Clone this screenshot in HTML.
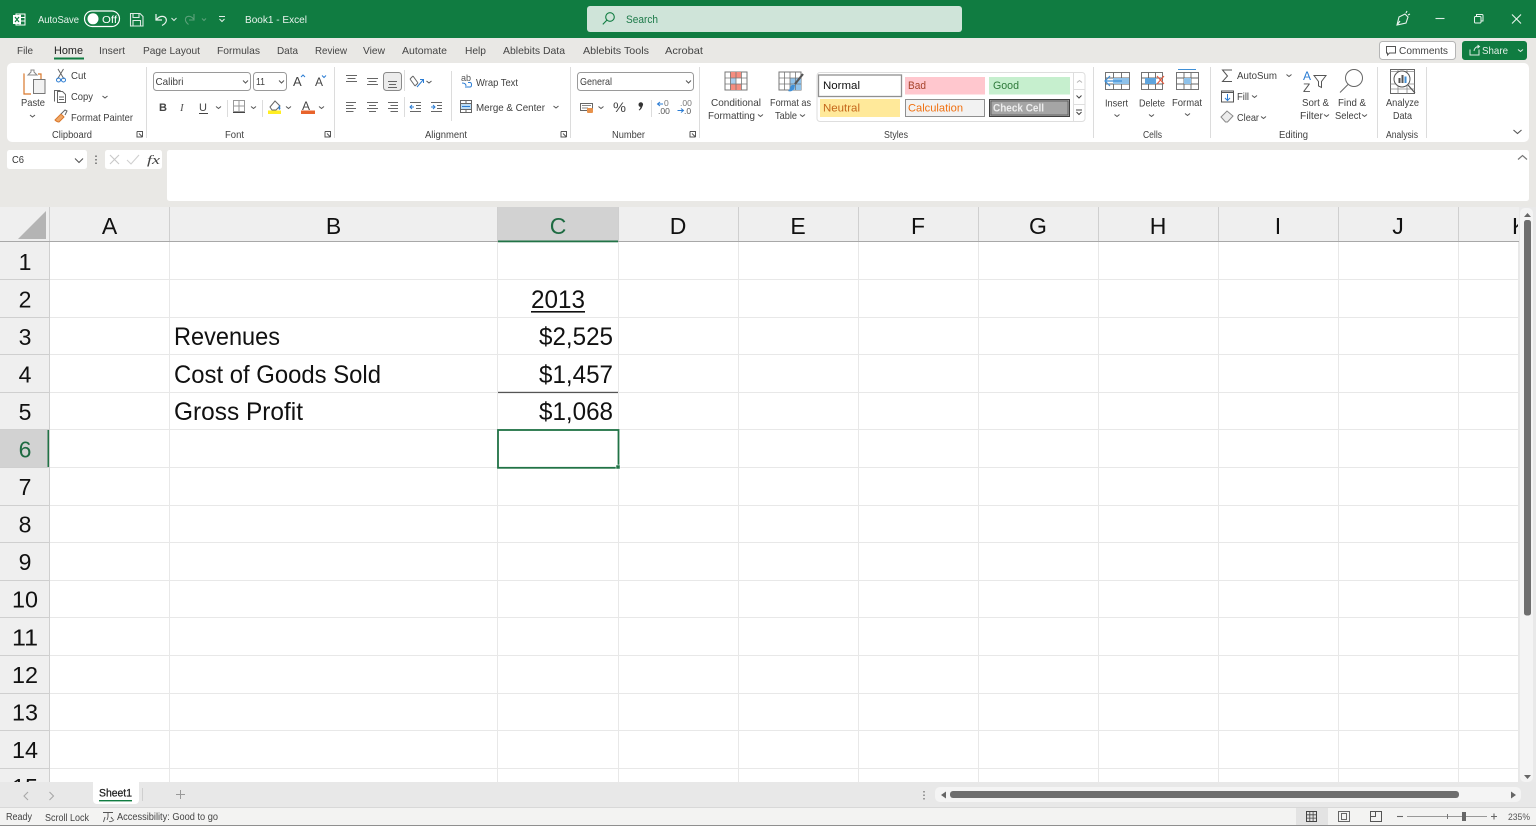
<!DOCTYPE html>
<html><head><meta charset="utf-8"><title>Book1 - Excel</title>
<style>
html,body{margin:0;padding:0;background:#fff;width:1536px;height:826px;overflow:hidden}
svg{display:block;position:absolute;left:0;top:0}
#root{filter:blur(.3px)}
text{font-family:"Liberation Sans",sans-serif;font-size:10.5px;fill:#444}
.t{fill:#3f3f3f}
.h{font-size:23px;fill:#111}
.c{font-size:25px;fill:#111}
.i{fill:none;stroke:#666;stroke-width:1}
.ch{fill:none;stroke:#555;stroke-width:1}
</style></head><body>
<svg id="root" width="1536" height="826" viewBox="0 0 1536 826" xmlns="http://www.w3.org/2000/svg">
<!-- backgrounds -->
<rect width="1536" height="826" fill="#fff"/>
<rect width="1536" height="38" fill="#107C41"/>
<rect y="38" width="1536" height="169" fill="#E9E8E5"/>

<!-- title bar -->
<g>
<rect x="16" y="14" width="9" height="11" fill="none" stroke="#fff"/><path d="M20 14v11M20 17.5h5M20 21h5" stroke="#fff" fill="none"/>
<rect x="13" y="15" width="8" height="9" fill="#fff"/><path d="M15 17l4 5M19 17l-4 5" stroke="#107C41" stroke-width="1.2"/>
<text x="38" y="23" style="fill:#e9f3ed" textLength="41" lengthAdjust="spacingAndGlyphs">AutoSave</text>
<rect x="84.500" y="11" width="35" height="15.500" rx="7.700" fill="none" stroke="#fff" stroke-width="1.200"/>
<circle cx="93" cy="18.800" r="5.500" fill="#fff"/>
<text x="102" y="23" style="fill:#fff;font-size:10px" textLength="15" lengthAdjust="spacingAndGlyphs">Off</text>
<path d="M130.500 13.500h9.500l3 3v9.500h-12.500zM133 13.500v4h6v-4M133 26v-5.500h7.500v5.500" fill="none" stroke="#dcebe3" stroke-width="1.100"/>
<path d="M156 14v6h6M156.500 19.500c3-4 8-4 9.500-1 1.200 3-1 5.500-4 7" fill="none" stroke="#eaf4ee" stroke-width="1.200"/>
<path d="M171.500 18l2.500 2.500 2.500-2.500" fill="none" stroke="#dcebe3"/>
<path d="M194 14v6h-5M193.500 19c-2-3-6-3.500-7.500-1.500-1.500 2.500 0 5 2.500 7" fill="none" stroke="#5da27b" stroke-width="1.100"/>
<path d="M202 18.500l2 2 2-2" fill="none" stroke="#5da27b"/>
<path d="M219 16.500h6M219.500 19l2.500 2.500 2.500-2.500" fill="none" stroke="#e4f0e9"/>
<text x="245" y="23" style="fill:#e9f3ed" textLength="62" lengthAdjust="spacingAndGlyphs">Book1  -  Excel</text>
<rect x="587" y="6" width="375" height="26" rx="3" fill="#CFE4D9"/>
<circle cx="610" cy="17" r="4.300" fill="none" stroke="#107C41" stroke-width="1.100"/><path d="M606.800 20.200l-4 4.200" stroke="#107C41" stroke-width="1.100"/>
<text x="626" y="23" style="fill:#1c7a49;font-size:11px" textLength="32" lengthAdjust="spacingAndGlyphs">Search</text>
<path d="M1397 25l2-8 6-3 3 3-2 6zM1397 25l3-4M1406 13l1-2M1408 15l2-1" fill="none" stroke="#e9f3ed" stroke-width="1.100"/>
<path d="M1435.500 18.500h9" stroke="#dcebe3" stroke-width="1.100"/>
<rect x="1474.500" y="16.500" width="6.500" height="6.500" rx="1" fill="none" stroke="#eaf4ee"/><path d="M1476.500 16v-1.500h5.500a1 1 0 0 1 1 1v5.500h-1.500" fill="none" stroke="#eaf4ee"/>
<path d="M1512 14.500l9 9M1521 14.500l-9 9" stroke="#eaf4ee" stroke-width="1.100"/>
</g>

<!-- tabs -->
<g class="tabs">
<text x="17" y="54" textLength="16" lengthAdjust="spacingAndGlyphs">File</text>
<text x="54" y="54" style="fill:#222;font-size:10.800px" textLength="29" lengthAdjust="spacingAndGlyphs">Home</text>
<rect x="54" y="57.500" width="30" height="2" fill="#107C41"/>
<text x="99" y="54" textLength="26" lengthAdjust="spacingAndGlyphs">Insert</text>
<text x="143" y="54" textLength="57" lengthAdjust="spacingAndGlyphs">Page Layout</text>
<text x="217" y="54" textLength="43" lengthAdjust="spacingAndGlyphs">Formulas</text>
<text x="277" y="54" textLength="21" lengthAdjust="spacingAndGlyphs">Data</text>
<text x="315" y="54" textLength="32" lengthAdjust="spacingAndGlyphs">Review</text>
<text x="363" y="54" textLength="22" lengthAdjust="spacingAndGlyphs">View</text>
<text x="402" y="54" textLength="45" lengthAdjust="spacingAndGlyphs">Automate</text>
<text x="465" y="54" textLength="21" lengthAdjust="spacingAndGlyphs">Help</text>
<text x="503" y="54" textLength="62" lengthAdjust="spacingAndGlyphs">Ablebits Data</text>
<text x="583" y="54" textLength="66" lengthAdjust="spacingAndGlyphs">Ablebits Tools</text>
<text x="665" y="54" textLength="38" lengthAdjust="spacingAndGlyphs">Acrobat</text>
<rect x="1379.500" y="41.500" width="76" height="18" rx="3" fill="#fff" stroke="#b5b5b5"/>
<path d="M1386.500 46.500h9v6.500h-6l-2 2v-2h-1z" fill="none" stroke="#555"/>
<text x="1399" y="54" textLength="49" lengthAdjust="spacingAndGlyphs">Comments</text>
<rect x="1462" y="41" width="65" height="19" rx="3" fill="#107C41"/>
<path d="M1470 49.500v5.500h9v-5.500M1474 51c.5-3 2.500-4.500 5-4.500M1477.500 45l2 1.500-2 1.800" fill="none" stroke="#dcebe3"/>
<text x="1482" y="54" style="fill:#e4f0e9" textLength="26" lengthAdjust="spacingAndGlyphs">Share</text>
<path d="M1518 49.500l2.500 2 2.500-2" fill="none" stroke="#e4f0e9"/>
</g>

<!-- ribbon -->
<rect x="7" y="63" width="1522" height="79" rx="5" fill="#fff"/>
<g stroke="#dcdcdc"><path d="M146.500 67v71M334.500 67v71M570.500 67v71M699.500 67v71M1093.500 67v71M1210.500 67v71M1377.500 67v71M1426.500 67v71"/></g>

<!-- clipboard -->
<path d="M24.500 74h-.5v20h7M38 74h3v5" fill="none" stroke="#d9772b" stroke-width="1.200"/>
<path d="M28 75l3-3v-2h3v2l3 3z" fill="#fff" stroke="#888"/>
<rect x="33.500" y="79.500" width="11.500" height="14" fill="#f2f2f2" stroke="#777"/>
<text class="t" x="21" y="106" textLength="24" lengthAdjust="spacingAndGlyphs">Paste</text>
<path class="ch" d="M30 115l2.500 2 2.500-2"/>
<path d="M58 69l6 10M63.500 69l-6 10" stroke="#666" fill="none"/><circle cx="58.500" cy="80" r="2" fill="none" stroke="#2b7cd3"/><circle cx="63.500" cy="80" r="2" fill="none" stroke="#2b7cd3"/>
<text class="t" x="71" y="79" textLength="15" lengthAdjust="spacingAndGlyphs">Cut</text>
<path d="M54.500 101.500v-11h6M57.500 91.500h5l3 3v8h-8zM59 97h5M59 99.500h5" class="i"/>
<text class="t" x="71" y="100" textLength="22" lengthAdjust="spacingAndGlyphs">Copy</text>
<path class="ch" d="M102.500 96l2.500 2 2.500-2"/>
<path d="M55 120l6-6 3 3-5 5c-2 0-3-1-4-2z" fill="#f0a868" stroke="#d9772b"/><path d="M61 114l4-4 2 1-2 4" fill="#fff" stroke="#666"/>
<text class="t" x="71" y="121" textLength="62" lengthAdjust="spacingAndGlyphs">Format Painter</text>
<text class="t" x="52" y="138" style="font-size:9.800px" textLength="40" lengthAdjust="spacingAndGlyphs">Clipboard</text>
<path class="ch" d="M137 131.500h5.500v5.500M137 131.500v5.500h5.500M139 133.500l3 3" stroke-width=".8"/>

<!-- font -->
<rect x="153.500" y="72.500" width="97" height="18" rx="3" fill="#fff" stroke="#9a9a9a"/>
<text class="t" x="155.500" y="85" textLength="28" lengthAdjust="spacingAndGlyphs">Calibri</text>
<path class="ch" d="M243 80.500l2.500 2.500 2.500-2.500"/>
<rect x="253.500" y="72.500" width="33" height="18" rx="3" fill="#fff" stroke="#9a9a9a"/>
<text class="t" x="256" y="85" textLength="9" lengthAdjust="spacingAndGlyphs">11</text>
<path class="ch" d="M279 80.500l2.500 2.500 2.500-2.500"/>
<text x="293" y="86" style="font-size:13px;fill:#444">A</text><path d="M301 77l2-2 2 2" fill="none" stroke="#2b7cd3"/>
<text x="315" y="86" style="font-size:12px;fill:#444">A</text><path d="M322 75.500l2 2 2-2" fill="none" stroke="#2b7cd3"/>
<text x="159" y="111" style="font-size:11px;font-weight:bold;fill:#444">B</text>
<text x="180" y="111" style="font-size:11px;font-style:italic;fill:#555;font-family:'Liberation Serif',serif">I</text>
<text x="199" y="111" style="font-size:11px;fill:#444">U</text><path d="M199 113.500h9" stroke="#444"/>
<path class="ch" d="M216 106.500l2.500 2 2.500-2"/>
<path d="M227.500 100v17M262.500 100v17" stroke="#dcdcdc"/>
<rect x="233.500" y="100.500" width="11" height="11" fill="none" stroke="#999"/><path d="M239 100.500v11M233.500 106h11" stroke="#999"/><path d="M233 112.500h12" stroke="#444"/>
<path class="ch" d="M251 106.500l2.500 2 2.500-2"/>
<path d="M270 107l5-6 5 5-4 4h-4z" fill="#fff" stroke="#666"/><path d="M279 105c1 2 2 3 1 4.500-1 .8-2-.5-1-4.500z" fill="#2b7cd3"/>
<rect x="268" y="110.500" width="13" height="3.500" fill="#FFEE22"/>
<path class="ch" d="M286 106.500l2.500 2 2.500-2"/>
<text x="302" y="110" style="font-size:12px;fill:#444">A</text>
<rect x="301" y="110.500" width="14" height="3.500" fill="#E8632B"/>
<path class="ch" d="M319 106.500l2.500 2 2.500-2"/>
<text class="t" x="225" y="138" style="font-size:9.800px" textLength="19" lengthAdjust="spacingAndGlyphs">Font</text>
<path class="ch" d="M325 131.500h5.500v5.500M325 131.500v5.500h5.500M327 133.500l3 3" stroke-width=".8"/>

<!-- alignment -->
<path class="i" d="M346 75.500h11M347.500 78.500h8M346 81.500h11M367 78.500h11M368.500 81.500h8M367 84.500h11"/>
<rect x="383.500" y="72.500" width="18" height="18" rx="3" fill="#ececec" stroke="#8a8a8a"/>
<path class="i" d="M388 81.500h9M389 84.500h7M388 87.500h9"/>
<path d="M404.500 70v21" stroke="#dcdcdc"/>
<path d="M410 79l5 7M413 76l5 7M410 79l3-3M415 86l3-3" fill="none" stroke="#666"/><path d="M417 87l6-7M420 79.500h3.500v3.500" fill="none" stroke="#2b7cd3"/>
<path class="ch" d="M426.500 81l2.500 2 2.500-2"/>
<path class="i" d="M346 102.500h10M346 105.500h7.500M346 108.500h10M346 111.500h7.500M367 102.500h11M369 105.500h7M367 108.500h11M369 111.500h7M388 102.500h10M390.500 105.500h7.500M388 108.500h10M390.500 111.500h7.500"/>
<path d="M404.500 97v20" stroke="#dcdcdc"/>
<path class="i" d="M410 102.500h11M410 111.500h11M416 105.500h5M416 108.500h5M431 102.500h11M431 111.500h11M437 105.500h5M437 108.500h5"/>
<path d="M414 107h-4M412 105l-2 2 2 2M431 107h4M433 105l2 2-2 2" fill="none" stroke="#2b7cd3"/>
<path d="M451.500 71v50" stroke="#dcdcdc"/>
<text x="461" y="81" style="font-size:9px;fill:#555">ab</text>
<path d="M462 83c3 0 4 1 4 3M468 82.500h2c2 0 2 4.500 0 4.500H465" fill="none" stroke="#2b7cd3"/>
<text class="t" x="476" y="86" textLength="42" lengthAdjust="spacingAndGlyphs">Wrap Text</text>
<rect x="460.500" y="100.500" width="11" height="12" fill="#fff" stroke="#666"/><rect x="461" y="104" width="10" height="5" fill="#bcdcf4"/><path d="M461 103.500h10M461 109.500h10M466 101v2M466 110v2" stroke="#666"/><path d="M462 106.500h8" stroke="#2b7cd3"/>
<text class="t" x="476" y="111" textLength="69" lengthAdjust="spacingAndGlyphs">Merge &amp; Center</text>
<path class="ch" d="M553.500 106l2.500 2 2.500-2"/>
<text class="t" x="425" y="138" style="font-size:9.800px" textLength="42" lengthAdjust="spacingAndGlyphs">Alignment</text>
<path class="ch" d="M561 131.500h5.500v5.500M561 131.500v5.500h5.500M563 133.500l3 3" stroke-width=".8"/>

<!-- number -->
<rect x="577.500" y="72.500" width="116" height="18" rx="3" fill="#fff" stroke="#9a9a9a"/>
<text class="t" x="580" y="85" textLength="32" lengthAdjust="spacingAndGlyphs">General</text>
<path class="ch" d="M686 80.500l2.500 2.500 2.500-2.500"/>
<rect x="580.500" y="103.500" width="12" height="7" fill="#fff" stroke="#666"/><path d="M582 105.500h9M582 108h6" stroke="#888"/><rect x="587" y="108" width="6" height="5" rx="1" fill="#E8924B"/>
<path class="ch" d="M598.500 106.500l2.500 2 2.500-2"/>
<text x="613" y="112" style="font-size:14px;fill:#444" textLength="13" lengthAdjust="spacingAndGlyphs">%</text>
<path d="M638.500 104.500a2.300 2.300 0 1 1 4 1.600c-.5 1.800-1.500 3.400-3.200 4.400l-.6-.6c1-.8 1.600-1.600 1.800-3.100-1.200.2-2-1-2-2.300z" fill="#333"/>
<path d="M651.500 100v17" stroke="#dcdcdc"/>
<text x="664" y="106" style="font-size:8.500px;fill:#777">0</text><text x="658" y="114" style="font-size:8.500px;fill:#555">.00</text>
<path d="M663 104h-5.500M660 102l-2.500 2 2.500 2" fill="none" stroke="#2b7cd3"/>
<text x="680" y="106" style="font-size:8.500px;fill:#777">.00</text><text x="684" y="114" style="font-size:8.500px;fill:#555">.0</text>
<path d="M677.500 110.500h6M681 108.500l2.500 2-2.500 2" fill="none" stroke="#2b7cd3"/>
<text class="t" x="612" y="138" style="font-size:9.800px" textLength="33" lengthAdjust="spacingAndGlyphs">Number</text>
<path class="ch" d="M690 131.500h5.500v5.500M690 131.500v5.500h5.500M692 133.500l3 3" stroke-width=".8"/>

<!-- styles -->
<rect x="725" y="72" width="22" height="18" fill="#fff" stroke="#777"/>
<rect x="730" y="72" width="11" height="6" fill="#F58D7F"/><rect x="730" y="84" width="11" height="6" fill="#F58D7F"/><rect x="730" y="78" width="6" height="6" fill="#a9cfee"/>
<path d="M725 78h22M725 84h22M730.500 72v18M736 72v18M741.500 72v18" stroke="#777" fill="none" stroke-width=".8"/>
<text class="t" x="711" y="106" textLength="50" lengthAdjust="spacingAndGlyphs">Conditional</text>
<text class="t" x="708" y="119" textLength="47" lengthAdjust="spacingAndGlyphs">Formatting</text>
<path class="ch" d="M758 114.500l2.500 2 2.500-2"/>
<rect x="779" y="72" width="22" height="18" fill="#fff" stroke="#777"/>
<rect x="790" y="78" width="11" height="12" fill="#8fc2ea"/>
<path d="M779 78h22M779 84h22M784.500 72v18M790 72v18M795.500 72v18" stroke="#777" fill="none" stroke-width=".8"/>
<path d="M803 74l-8 10" stroke="#555" stroke-width="2.200"/><path d="M792 85l3 0-1 4c-1 2-4 3-6 2 2-1 2-5 4-6z" fill="#3f8fd6"/>
<text class="t" x="770" y="106" textLength="41" lengthAdjust="spacingAndGlyphs">Format as</text>
<text class="t" x="775" y="119" textLength="22" lengthAdjust="spacingAndGlyphs">Table</text>
<path class="ch" d="M800 114.500l2.500 2 2.500-2"/>

<rect x="817" y="72.500" width="268" height="49" rx="3" fill="#fff" stroke="#dedede"/>
<rect x="818.500" y="75" width="83" height="21.500" fill="#fff" stroke="#909090" stroke-width="1.300"/>
<text x="823" y="89" style="font-size:11px;fill:#111" textLength="37" lengthAdjust="spacingAndGlyphs">Normal</text>
<rect x="905" y="77" width="80" height="17.500" fill="#FFC7CE"/>
<text x="908" y="89" style="font-size:11px;fill:#A6432B" textLength="18" lengthAdjust="spacingAndGlyphs">Bad</text>
<rect x="989" y="77" width="81" height="17.500" fill="#C6EFCE"/>
<text x="993" y="89" style="font-size:11px;fill:#2E7A3A" textLength="26" lengthAdjust="spacingAndGlyphs">Good</text>
<rect x="820" y="99" width="80" height="18" fill="#FFE99A"/>
<text x="823" y="111.500" style="font-size:11px;fill:#C4661A" textLength="37" lengthAdjust="spacingAndGlyphs">Neutral</text>
<rect x="905.500" y="99.500" width="79" height="17" fill="#F2F2F2" stroke="#8f8f8f"/>
<text x="908" y="111.500" style="font-size:11px;fill:#F07010" textLength="55" lengthAdjust="spacingAndGlyphs">Calculation</text>
<rect x="989.500" y="99.500" width="80" height="17" fill="#A5A5A5" stroke="#3F3F3F"/><rect x="991" y="101" width="77" height="14" fill="none" stroke="#555" stroke-width=".8"/>
<text x="993" y="111.500" style="font-size:11px;fill:#ededed;font-weight:bold" textLength="51" lengthAdjust="spacingAndGlyphs">Check Cell</text>
<path d="M1073.500 73v48M1073.500 89.500h12M1073.500 104.500h12" stroke="#dedede"/>
<path d="M1077 82.500l2.500-2 2.500 2" fill="none" stroke="#b5b5b5"/>
<path d="M1076.500 95.500l2.500 2.500 2.500-2.500" fill="none" stroke="#444"/>
<path d="M1076 110h6M1076.500 112l2.500 2.500 2.500-2.500" fill="none" stroke="#444"/>
<text class="t" x="884" y="138" style="font-size:9.800px" textLength="24" lengthAdjust="spacingAndGlyphs">Styles</text>

<!-- cells -->
<g stroke="#666" fill="none" stroke-width=".9">
<rect x="1105.500" y="72.500" width="24" height="17"/><path d="M1105.500 78h24M1105.500 84h24M1113.500 72.500v17M1121.500 72.500v17"/>
<rect x="1141.500" y="72.500" width="21" height="17"/><path d="M1141.500 78h21M1141.500 84h21M1148.500 72.500v17M1155.500 72.500v17"/>
<rect x="1176.500" y="72.500" width="22" height="17"/><path d="M1176.500 78h22M1176.500 84h22M1184 72.500v17M1191 72.500v17"/>
</g>
<rect x="1113" y="78" width="16" height="6" fill="#8fc2ea"/><path d="M1122 81h-17M1110 76l-5 5 5 5" fill="none" stroke="#3f8fd6" stroke-width="1.200"/>
<rect x="1145" y="78" width="11" height="6" fill="#5ea4dd"/><path d="M1157 76l7 8M1164 76l-7 8" stroke="#E85A3C" stroke-width="1.100"/>
<rect x="1184" y="78" width="7" height="6" fill="#8fc2ea"/><path d="M1178 69.500h18" stroke="#3f8fd6"/>
<text class="t" x="1105" y="106.500" textLength="23" lengthAdjust="spacingAndGlyphs">Insert</text>
<path class="ch" d="M1114.500 114.500l2.500 2 2.500-2"/>
<text class="t" x="1139" y="106.500" textLength="26" lengthAdjust="spacingAndGlyphs">Delete</text>
<path class="ch" d="M1149 114.500l2.500 2 2.500-2"/>
<text class="t" x="1172" y="106" textLength="30" lengthAdjust="spacingAndGlyphs">Format</text>
<path class="ch" d="M1185 113.500l2.500 2 2.500-2"/>
<text class="t" x="1143" y="138" style="font-size:9.800px" textLength="19" lengthAdjust="spacingAndGlyphs">Cells</text>

<!-- editing -->
<path d="M1232 70h-9.500l5 6-5 5.500h9.500" fill="none" stroke="#555"/>
<text class="t" x="1237" y="79" textLength="40" lengthAdjust="spacingAndGlyphs">AutoSum</text>
<path class="ch" d="M1286.500 74.500l2.500 2 2.500-2"/>
<rect x="1221.500" y="91" width="12" height="11" fill="none" stroke="#555"/><path d="M1221.500 92.500h12" stroke="#555"/><path d="M1227.500 94v6M1225 98l2.500 2.500 2.500-2.500" fill="none" stroke="#2b7cd3"/>
<text class="t" x="1237" y="100" textLength="12" lengthAdjust="spacingAndGlyphs">Fill</text>
<path class="ch" d="M1252 95.500l2.500 2 2.500-2"/>
<path d="M1221 117l6-6 6 5-5.500 6h-2z" fill="#ececec" stroke="#888"/>
<text class="t" x="1237" y="121" textLength="22" lengthAdjust="spacingAndGlyphs">Clear</text>
<path class="ch" d="M1261 116.500l2.500 2 2.500-2"/>
<text x="1303" y="80" style="font-size:12px;fill:#2b7cd3">A</text><text x="1303" y="92" style="font-size:12px;fill:#555">Z</text>
<path d="M1314 75.500h12l-4.500 6v6l-3-1.500v-4.500z" fill="none" stroke="#555"/>
<text class="t" x="1302" y="106" textLength="27" lengthAdjust="spacingAndGlyphs">Sort &amp;</text>
<text class="t" x="1300" y="119" textLength="23" lengthAdjust="spacingAndGlyphs">Filter</text>
<path class="ch" d="M1324 114.500l2.500 2 2.500-2"/>
<circle cx="1354" cy="78" r="8.500" fill="none" stroke="#666"/><path d="M1348 84.500l-8 8" stroke="#666"/>
<text class="t" x="1338" y="106" textLength="28" lengthAdjust="spacingAndGlyphs">Find &amp;</text>
<text class="t" x="1335" y="119" textLength="26" lengthAdjust="spacingAndGlyphs">Select</text>
<path class="ch" d="M1362 114.500l2.500 2 2.500-2"/>
<text class="t" x="1279" y="138" style="font-size:9.800px" textLength="29" lengthAdjust="spacingAndGlyphs">Editing</text>

<!-- analysis -->
<rect x="1390.500" y="69.500" width="24" height="24" fill="#fff" stroke="#666"/>
<path d="M1390.500 71.500h24M1390.500 84h24M1390.500 89h24M1398 69.500v24M1407 69.500v24" stroke="#888" stroke-width=".8" fill="none"/>
<circle cx="1402" cy="79" r="8" fill="#fff" stroke="#555"/>
<rect x="1398.500" y="78" width="2" height="5" fill="#555"/><rect x="1401.500" y="75" width="2" height="8" fill="#555"/><rect x="1404.500" y="76.500" width="2" height="6.500" fill="#3f8fd6"/>
<path d="M1408 85l7 8" stroke="#555" stroke-width="1.200"/>
<text class="t" x="1386" y="106" textLength="33" lengthAdjust="spacingAndGlyphs">Analyze</text>
<text class="t" x="1393" y="119" textLength="19" lengthAdjust="spacingAndGlyphs">Data</text>
<text class="t" x="1386" y="138" style="font-size:9.800px" textLength="32" lengthAdjust="spacingAndGlyphs">Analysis</text>
<path d="M1513.500 130l4 3.500 4-3.500" fill="none" stroke="#555" stroke-width="1.100"/>

<!-- formula bar -->
<rect x="7" y="150" width="80" height="19" rx="2.500" fill="#fff"/>
<text x="12" y="163" style="font-size:10.500px;fill:#333" textLength="12" lengthAdjust="spacingAndGlyphs">C6</text>
<path d="M75 158.500l4 4 4-4" fill="none" stroke="#555" stroke-width="1.100"/>
<path d="M96 155.500v1.500M96 159v1.500M96 162.500v1.500" stroke="#555" stroke-width="1.300"/>
<rect x="105" y="150" width="57" height="19" rx="2.500" fill="#fff"/>
<path d="M110 155l9 9M119 155l-9 9" stroke="#c8c8c8" stroke-width="1.100"/>
<path d="M127 160l4 4 8-9" fill="none" stroke="#d0d0d0" stroke-width="1.100"/>
<text x="147" y="164" style="font-size:13px;font-style:italic;fill:#444;font-family:'Liberation Serif',serif" textLength="13" lengthAdjust="spacingAndGlyphs">fx</text>
<rect x="167" y="150" width="1362" height="51" rx="2.500" fill="#fff"/>
<path d="M1518 159.500l4.500-4 4.500 4" fill="none" stroke="#777" stroke-width="1.200"/>

<!-- grid headers -->
<rect x="0" y="207" width="1520" height="35" fill="#EFEFEF"/>
<rect x="0" y="242" width="49" height="540" fill="#EFEFEF"/>
<path d="M18 239L46 239L46 211Z" fill="#B4B4B4"/>
<rect x="498" y="207" width="120" height="35" fill="#D2D2D2"/>
<rect x="498" y="240.500" width="120" height="1.800" fill="#217346"/>
<rect x="0" y="430" width="49" height="37.500" fill="#D2D2D2"/>
<rect x="47.500" y="430" width="1.800" height="37.500" fill="#217346"/>
<!-- grid lines -->
<g stroke="#E8E8E8" stroke-width="1">
<path d="M49 279.500H1519M49 317.500H1519M49 354.500H1519M49 392.500H1519M49 429.500H1519M49 467.500H1519M49 505.500H1519M49 542.500H1519M49 580.500H1519M49 617.500H1519M49 655.500H1519M49 693.500H1519M49 730.500H1519M49 768.500H1519"/>
<path d="M169.500 242V782M497.500 242V782M618.500 242V782M738.500 242V782M858.500 242V782M978.500 242V782M1098.500 242V782M1218.500 242V782M1338.500 242V782M1458.500 242V782M1518.500 242V782"/>
</g>
<g stroke="#CFCFCF" stroke-width="1">
<path d="M0 279.500H49M0 317.500H49M0 354.500H49M0 392.500H49M0 429.500H49M0 467.500H49M0 505.500H49M0 542.500H49M0 580.500H49M0 617.500H49M0 655.500H49M0 693.500H49M0 730.500H49M0 768.500H49"/>
<path d="M49.500 207V782M169.500 207V241M497.500 207V241M618.500 207V241M738.500 207V241M858.500 207V241M978.500 207V241M1098.500 207V241M1218.500 207V241M1338.500 207V241M1458.500 207V241"/>
</g>
<path d="M0 241.500H498M618 241.500H1519" stroke="#a8a8a8" stroke-width="1"/>
<!-- column letters -->
<g text-anchor="middle">
<text class="h" x="109.500" y="234">A</text>
<text class="h" x="333.500" y="234">B</text>
<text class="h" x="558" y="234" style="fill:#1E6B42">C</text>
<text class="h" x="678" y="234">D</text>
<text class="h" x="798" y="234">E</text>
<text class="h" x="918" y="234">F</text>
<text class="h" x="1038" y="234">G</text>
<text class="h" x="1158" y="234">H</text>
<text class="h" x="1278" y="234">I</text>
<text class="h" x="1398" y="234">J</text>
</g>
<svg x="1458" y="207" width="60" height="34"><text class="h" x="54" y="27">K</text></svg>
<!-- row numbers -->
<g text-anchor="middle">
<text class="h" x="25" y="270">1</text>
<text class="h" x="25" y="307.500">2</text>
<text class="h" x="25" y="345">3</text>
<text class="h" x="25" y="382.500">4</text>
<text class="h" x="25" y="420">5</text>
<text class="h" x="25" y="457.500" style="fill:#1E6B42">6</text>
<text class="h" x="25" y="495">7</text>
<text class="h" x="25" y="532.500">8</text>
<text class="h" x="25" y="570">9</text>
<text class="h" x="25" y="607.500" textLength="26" lengthAdjust="spacingAndGlyphs">10</text>
<text class="h" x="25" y="645.500" textLength="26" lengthAdjust="spacingAndGlyphs">11</text>
<text class="h" x="25" y="683" textLength="26" lengthAdjust="spacingAndGlyphs">12</text>
<text class="h" x="25" y="720.500" textLength="26" lengthAdjust="spacingAndGlyphs">13</text>
<text class="h" x="25" y="758" textLength="26" lengthAdjust="spacingAndGlyphs">14</text>
<text class="h" x="25" y="795" textLength="26" lengthAdjust="spacingAndGlyphs">15</text>
</g>
<!-- cell content -->
<text class="c" x="531" y="308" textLength="54" lengthAdjust="spacingAndGlyphs">2013</text>
<rect x="531" y="311" width="54" height="1.600" fill="#111"/>
<text class="c" x="174" y="345" textLength="106" lengthAdjust="spacingAndGlyphs">Revenues</text>
<text class="c" x="539" y="345" textLength="74" lengthAdjust="spacingAndGlyphs">$2,525</text>
<text class="c" x="174" y="383" textLength="207" lengthAdjust="spacingAndGlyphs">Cost of Goods Sold</text>
<text class="c" x="539" y="383" textLength="74" lengthAdjust="spacingAndGlyphs">$1,457</text>
<rect x="498" y="391.800" width="120" height="1.300" fill="#555"/>
<text class="c" x="174" y="420" textLength="129" lengthAdjust="spacingAndGlyphs">Gross Profit</text>
<text class="c" x="539" y="420" textLength="74" lengthAdjust="spacingAndGlyphs">$1,068</text>
<!-- selection -->
<rect x="498" y="430" width="120.500" height="37.800" fill="none" stroke="#217346" stroke-width="1.800"/>
<rect x="616" y="465" width="4" height="4" fill="#217346" stroke="#fff" stroke-width=".5"/>

<!-- v scrollbar -->
<rect x="1519" y="207" width="17" height="575" fill="#E9E9E9"/>
<rect x="1520" y="208" width="13" height="574" rx="5" fill="#F4F4F4"/>
<path d="M1524 217l3.500-4 3.500 4z" fill="#666"/>
<rect x="1524" y="220" width="7" height="395.500" rx="2.500" fill="#6E6E6E"/>
<path d="M1524 775l3.500 4 3.500-4z" fill="#666"/>

<!-- sheet bar -->
<rect x="0" y="782" width="1536" height="26" fill="#E8E8E8"/>
<path d="M28 792l-4 4 4 4M49.500 792l4 4-4 4" fill="none" stroke="#a8a8a8" stroke-width="1.100"/>
<path d="M93 782h46v18a4 4 0 0 1-4 4h-38a4 4 0 0 1-4-4z" fill="#fff"/>
<text x="99" y="796.500" style="font-size:11px;fill:#222;stroke:#222;stroke-width:.25" textLength="33" lengthAdjust="spacingAndGlyphs">Sheet1</text>
<rect x="99" y="800" width="33" height="1.400" fill="#107C41"/>
<path d="M142.500 788v13" stroke="#cfcfcf"/>
<path d="M176 794.500h9M180.500 790v9" stroke="#999" stroke-width="1"/>
<path d="M924 791v1.500M924 794.500v1.500M924 798v1.500" stroke="#666" stroke-width="1.200"/>
<rect x="935" y="787" width="586" height="15" rx="5" fill="#F4F4F4"/>
<path d="M946 791.500l-5 3.500 5 3.500z" fill="#666"/>
<rect x="950" y="791" width="509" height="7" rx="3" fill="#6E6E6E"/>
<path d="M1511 791.500l5 3.500-5 3.500z" fill="#666"/>

<!-- status bar -->
<rect x="0" y="808" width="1536" height="17" fill="#F3F3F2"/>
<rect x="0" y="807" width="1536" height="1" fill="#D8D8D8"/>
<rect x="0" y="825" width="1536" height="1" fill="#8f8f8f"/>
<text x="6" y="820" style="font-size:9.800px" textLength="26" lengthAdjust="spacingAndGlyphs">Ready</text>
<text x="45" y="821" style="font-size:9.800px" textLength="44" lengthAdjust="spacingAndGlyphs">Scroll Lock</text>
<path d="M103 812.500h10M108 812v5M105 817c-.5 2-1 3-1.500 5M111 817c.5 1 1 2 2 2M108 817l-1 3M109 821.500c2 .5 4-.5 5-2" fill="none" stroke="#555" stroke-width=".9"/>
<text x="117" y="820" style="font-size:9.800px" textLength="101" lengthAdjust="spacingAndGlyphs">Accessibility: Good to go</text>
<rect x="1296" y="808" width="32" height="17" fill="#E3E3E3"/>
<rect x="1306.500" y="811.500" width="10" height="10" fill="none" stroke="#444"/><path d="M1306.500 814.800h10M1306.500 818.100h10M1309.800 811.500v10M1313.100 811.500v10" stroke="#444" stroke-width=".8"/>
<rect x="1338.500" y="811.500" width="11" height="10" fill="none" stroke="#666"/><rect x="1341.500" y="813.500" width="5" height="6" fill="none" stroke="#666"/>
<path d="M1370.500 811.500h11v10h-11zM1375.500 811.500v5h-5" fill="none" stroke="#555"/>
<path d="M1397 816.500h6" stroke="#666" stroke-width="1.100"/>
<path d="M1407 816.500h80" stroke="#999"/>
<path d="M1447.500 814v5" stroke="#777"/>
<rect x="1462" y="812" width="4" height="9" fill="#666"/>
<path d="M1491 816.500h6M1494 813.500v6" stroke="#666" stroke-width="1.100"/>
<text x="1508" y="820" style="font-size:9.500px;fill:#555" textLength="22" lengthAdjust="spacingAndGlyphs">235%</text>
</svg>
</body></html>
